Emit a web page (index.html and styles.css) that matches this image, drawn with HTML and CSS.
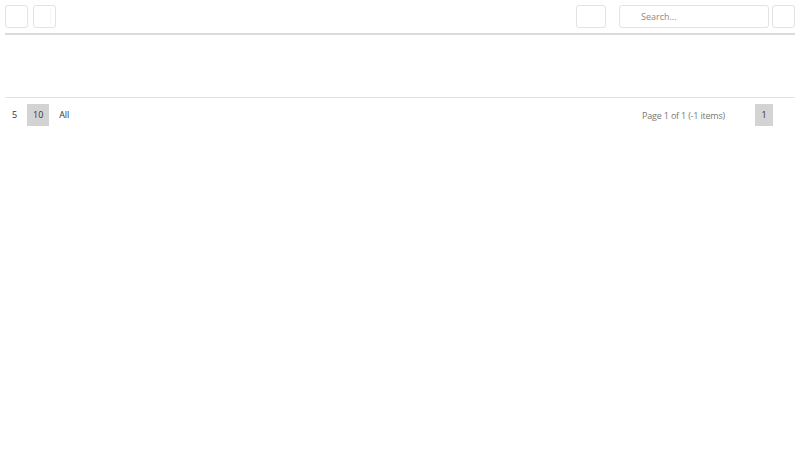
FILE: index.html
```html
<!DOCTYPE html>
<html>
<head>
<meta charset="utf-8">
<link rel="stylesheet" href="styles.css">
</head>
<body>
<div class="grid">
  <div class="toolbar">
    <div class="group">
      <div class="btn"></div>
      <div class="btn split"><span class="sep"></span></div>
    </div>
    <div class="group right">
      <div class="btn wide"></div>
      <div class="search">Search...</div>
      <div class="btn last"></div>
    </div>
  </div>
  <div class="header-line"></div>
  <div class="body"></div>
  <div class="pager">
    <div class="sizes">
      <span class="size">5</span>
      <span class="size active">10</span>
      <span class="size">All</span>
    </div>
    <div class="info">
      <span class="summary">Page 1 of 1 (-1 items)</span>
      <span class="page active">1</span>
    </div>
  </div>
</div>
</body>
</html>
```
FILE: styles.css
```css
html, body {
  margin: 0;
  background: #fff;
  font-family: "Open Sans", "Noto Sans", sans-serif;
  font-size: 9px;
  color: #333;
}
.grid {
  padding: 5px;
}
.toolbar {
  display: flex;
  justify-content: space-between;
  height: 23px;
}
.group {
  display: flex;
  gap: 5px;
}
.group.right {
  gap: 0;
}
.btn {
  box-sizing: border-box;
  width: 23px;
  height: 23px;
  border: 1px solid #e3e3e3;
  border-radius: 3px;
  position: relative;
}
.split .sep {
  position: absolute;
  left: 16px;
  top: 3px;
  bottom: 3px;
  width: 1px;
  background: #f4f4f4;
}
.btn.wide {
  width: 30px;
  margin-right: 13px;
}
.search {
  box-sizing: border-box;
  width: 150px;
  height: 23px;
  border: 1px solid #e3e3e3;
  border-radius: 3px;
  padding-left: 21px;
  line-height: 21px;
  color: #8a8a8a;
  margin-right: 3px;
}
.header-line {
  height: 2px;
  background: #dcdcdc;
  margin-top: 5px;
}
.body {
  height: 62px;
  border-bottom: 1px solid #e3e3e3;
}
.pager {
  display: flex;
  justify-content: space-between;
  align-items: center;
  margin-top: 6px;
  height: 22px;
}
.sizes {
  display: flex;
  align-items: center;
  padding-left: 7px;
}
.size {
  display: inline-block;
  height: 22px;
  line-height: 22px;
  margin-right: 10px;
  color: #333;
}
.size.active {
  background: #d3d3d3;
  width: 22px;
  text-align: center;
}
.info {
  display: flex;
  align-items: center;
}
.summary {
  color: #777;
  letter-spacing: -0.2px;
  margin-right: 30px;
}
.page {
  display: inline-block;
  width: 18px;
  height: 22px;
  line-height: 22px;
  text-align: center;
  margin-right: 22px;
  color: #333;
}
.page.active {
  background: #d3d3d3;
}
```
